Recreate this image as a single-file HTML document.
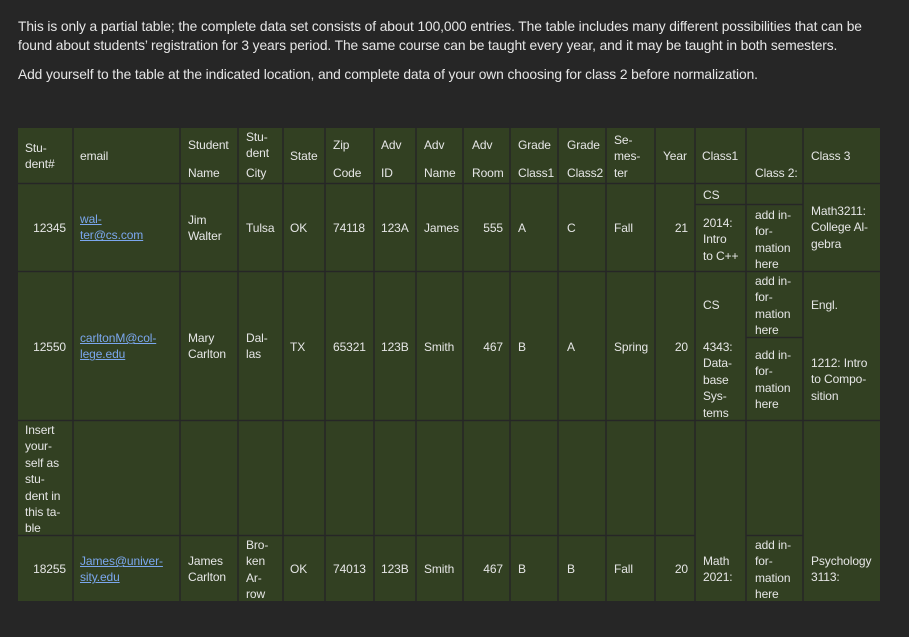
<!DOCTYPE html>
<html><head><meta charset="utf-8"><style>
body{margin:0;width:909px;height:637px;background:#262626;position:relative;overflow:hidden;font-family:"Liberation Sans",sans-serif;color:#e6e6e6}
.p{position:absolute;left:18px;font-size:13.8px;white-space:nowrap;letter-spacing:-0.1px}
.c{position:absolute;background:#324022}
.t{position:absolute;font-size:12px;line-height:16.4px;white-space:nowrap;letter-spacing:-0.1px}
.r{text-align:right}
a{color:#7ba7ee;text-decoration:underline}
</style></head><body>
<div class="p" style="top:19px">This is only a partial table; the complete data set consists of about 100,000 entries. The table includes many different possibilities that can be</div>
<div class="p" style="top:38px">found about students’ registration for 3 years period. The same course can be taught every year, and it may be taught in both semesters.</div>
<div class="p" style="top:67px">Add yourself to the table at the indicated location, and complete data of your own choosing for class 2 before normalization.</div>

<div class="c" style="left:18px;top:128px;width:862px;height:473px"></div>
<svg style="position:absolute;left:0;top:0" width="909" height="637">
<g stroke="#262626" stroke-width="1.5">
<line x1="73" y1="128" x2="73" y2="601"/><line x1="180" y1="128" x2="180" y2="601"/><line x1="238" y1="128" x2="238" y2="601"/>
<line x1="283" y1="128" x2="283" y2="601"/><line x1="325" y1="128" x2="325" y2="601"/><line x1="374" y1="128" x2="374" y2="601"/>
<line x1="416" y1="128" x2="416" y2="601"/><line x1="463" y1="128" x2="463" y2="601"/><line x1="510" y1="128" x2="510" y2="601"/>
<line x1="558" y1="128" x2="558" y2="601"/><line x1="606" y1="128" x2="606" y2="601"/><line x1="655" y1="128" x2="655" y2="601"/>
<line x1="695" y1="128" x2="695" y2="601"/><line x1="746" y1="128" x2="746" y2="601"/><line x1="803" y1="128" x2="803" y2="601"/>
<line x1="18" y1="183.5" x2="880" y2="183.5"/><line x1="18" y1="271.5" x2="880" y2="271.5"/><line x1="18" y1="420.5" x2="880" y2="420.5"/>
<line x1="18" y1="535.5" x2="695" y2="535.5"/><line x1="746" y1="535.5" x2="803" y2="535.5"/>
<line x1="695" y1="204.5" x2="803" y2="204.5"/><line x1="746" y1="337.5" x2="803" y2="337.5"/>
</g></svg>

<div class="t" style="left:25px;top:140px">Stu-<br>dent#</div>
<div class="t" style="left:80px;top:148px">email</div>
<div class="t" style="left:188px;top:137px">Student</div><div class="t" style="left:188px;top:165px">Name</div>
<div class="t" style="left:246px;top:129px">Stu-<br>dent</div><div class="t" style="left:246px;top:165px">City</div>
<div class="t" style="left:290px;top:148px">State</div>
<div class="t" style="left:333px;top:137px">Zip</div><div class="t" style="left:333px;top:165px">Code</div>
<div class="t" style="left:381px;top:137px">Adv</div><div class="t" style="left:381px;top:165px">ID</div>
<div class="t" style="left:424px;top:137px">Adv</div><div class="t" style="left:424px;top:165px">Name</div>
<div class="t" style="left:472px;top:137px">Adv</div><div class="t" style="left:472px;top:165px">Room</div>
<div class="t" style="left:518px;top:137px">Grade</div><div class="t" style="left:518px;top:165px">Class1</div>
<div class="t" style="left:567px;top:137px">Grade</div><div class="t" style="left:567px;top:165px">Class2</div>
<div class="t" style="left:614px;top:132px">Se-<br>mes-</div><div class="t" style="left:614px;top:165px">ter</div>
<div class="t" style="left:663px;top:148px">Year</div>
<div class="t" style="left:702px;top:148px">Class1</div>
<div class="t" style="left:755px;top:165px">Class 2:</div>
<div class="t" style="left:811px;top:148px">Class 3</div>

<div class="t r" style="left:20px;width:46px;top:220px">12345</div>
<div class="t" style="left:80px;top:211px"><a>wal-</a><br><a>ter@cs.com</a></div>
<div class="t" style="left:188px;top:212px">Jim<br>Walter</div>
<div class="t" style="left:246px;top:220px">Tulsa</div>
<div class="t" style="left:290px;top:220px">OK</div>
<div class="t" style="left:333px;top:220px">74118</div>
<div class="t" style="left:381px;top:220px">123A</div>
<div class="t" style="left:424px;top:220px">James</div>
<div class="t r" style="left:465px;width:38px;top:220px">555</div>
<div class="t" style="left:518px;top:220px">A</div>
<div class="t" style="left:567px;top:220px">C</div>
<div class="t" style="left:614px;top:220px">Fall</div>
<div class="t r" style="left:657px;width:31px;top:220px">21</div>
<div class="t" style="left:703px;top:187px">CS</div>
<div class="t" style="left:703px;top:215px">2014:<br>Intro<br>to C++</div>
<div class="t" style="left:755px;top:207px">add in-<br>for-<br>mation<br>here</div>
<div class="t" style="left:811px;top:203px">Math3211:<br>College Al-<br>gebra</div>

<div class="t r" style="left:20px;width:46px;top:339px">12550</div>
<div class="t" style="left:80px;top:330px"><a>carltonM@col-</a><br><a>lege.edu</a></div>
<div class="t" style="left:188px;top:330px">Mary<br>Carlton</div>
<div class="t" style="left:246px;top:330px">Dal-<br>las</div>
<div class="t" style="left:290px;top:339px">TX</div>
<div class="t" style="left:333px;top:339px">65321</div>
<div class="t" style="left:381px;top:339px">123B</div>
<div class="t" style="left:424px;top:339px">Smith</div>
<div class="t r" style="left:465px;width:38px;top:339px">467</div>
<div class="t" style="left:518px;top:339px">B</div>
<div class="t" style="left:567px;top:339px">A</div>
<div class="t" style="left:614px;top:339px">Spring</div>
<div class="t r" style="left:657px;width:31px;top:339px">20</div>
<div class="t" style="left:703px;top:297px">CS</div>
<div class="t" style="left:703px;top:339px">4343:<br>Data-<br>base<br>Sys-<br>tems</div>
<div class="t" style="left:755px;top:273px">add in-<br>for-<br>mation<br>here</div>
<div class="t" style="left:755px;top:347px">add in-<br>for-<br>mation<br>here</div>
<div class="t" style="left:811px;top:297px">Engl.</div>
<div class="t" style="left:811px;top:355px">1212: Intro<br>to Compo-<br>sition</div>

<div class="t" style="left:25px;top:422px">Insert<br>your-<br>self as<br>stu-<br>dent in<br>this ta-<br>ble</div>

<div class="t r" style="left:20px;width:46px;top:561px">18255</div>
<div class="t" style="left:80px;top:553px"><a>James@univer-</a><br><a>sity.edu</a></div>
<div class="t" style="left:188px;top:553px">James<br>Carlton</div>
<div class="t" style="left:246px;top:537px">Bro-<br>ken<br>Ar-<br>row</div>
<div class="t" style="left:290px;top:561px">OK</div>
<div class="t" style="left:333px;top:561px">74013</div>
<div class="t" style="left:381px;top:561px">123B</div>
<div class="t" style="left:424px;top:561px">Smith</div>
<div class="t r" style="left:465px;width:38px;top:561px">467</div>
<div class="t" style="left:518px;top:561px">B</div>
<div class="t" style="left:567px;top:561px">B</div>
<div class="t" style="left:614px;top:561px">Fall</div>
<div class="t r" style="left:657px;width:31px;top:561px">20</div>
<div class="t" style="left:703px;top:553px">Math<br>2021:</div>
<div class="t" style="left:755px;top:537px">add in-<br>for-<br>mation<br>here</div>
<div class="t" style="left:811px;top:553px">Psychology<br>3113:</div>
</body></html>
